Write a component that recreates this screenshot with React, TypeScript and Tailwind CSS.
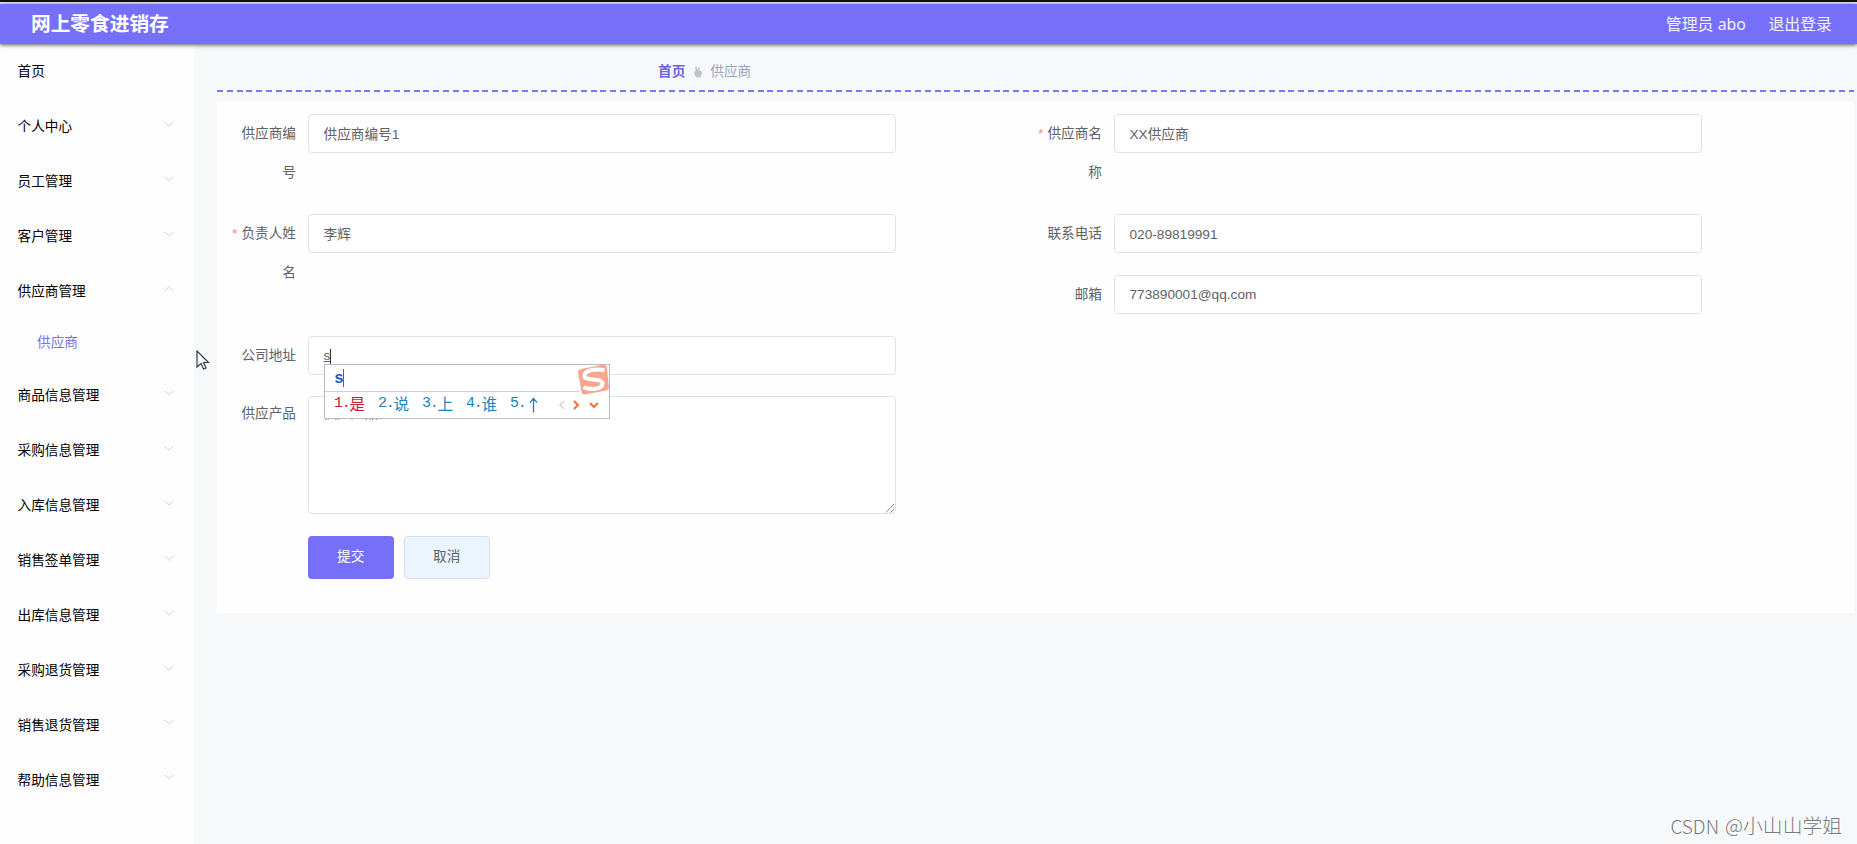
import React from "react";

type Entry = { name: string; children?: string[]; leaf?: boolean };

const entries: Entry[] = [
  { name: "首页", leaf: true },
  { name: "个人中心" },
  { name: "员工管理" },
  { name: "客户管理" },
  { name: "供应商管理", children: ["供应商"] },
  { name: "商品信息管理" },
  { name: "采购信息管理" },
  { name: "入库信息管理" },
  { name: "销售签单管理" },
  { name: "出库信息管理" },
  { name: "采购退货管理" },
  { name: "销售退货管理" },
  { name: "帮助信息管理" },
];

function Chevron({ up }: { up?: boolean }) {
  return (
    <svg width="10" height="6" viewBox="0 0 10 6" fill="none" stroke="#e2e2e6" strokeWidth="1.1" className="-mt-[7px]">
      <path d={up ? "M0.5 5 5 0.8 9.5 5" : "M0.5 0.8 5 5 9.5 0.8"} />
    </svg>
  );
}

function Sidebar() {
  return (
    <nav className="w-[194px] shrink-0 bg-[#fdfdfe] pt-[1.5px] text-black">
      {entries.map((e) => (
        <div key={e.name}>
          <div className="flex h-[54.95px] items-center justify-between pl-[17.5px] pr-[20.5px]">
            <span>{e.name}</span>
            {!e.leaf && <Chevron up={!!e.children} />}
          </div>
          {e.children?.map((c) => (
            <div key={c} className="flex h-[49.2px] items-center pb-[2px] pl-[37px] text-[#7874ea]">
              {c}
            </div>
          ))}
        </div>
      ))}
    </nav>
  );
}

function Field({ label, required, children, className = "" }: { label: string[]; required?: boolean; children: React.ReactNode; className?: string }) {
  return (
    <div className={"flex items-start " + className}>
      <div className="w-[79px] shrink-0 text-right leading-[39px] text-[#606266]">
        {label.map((l, i) => (
          <div key={l} className="whitespace-nowrap">
            {i === 0 && required && <span className="mr-1 text-[#f08a8a]">*</span>}
            {l}
          </div>
        ))}
      </div>
      <div className="ml-[11.5px] flex">{children}</div>
    </div>
  );
}

function Box({ children }: { children: React.ReactNode }) {
  return (
    <div className="flex h-[39px] w-[588px] items-center rounded-[4px] border border-[#dfe2e8] bg-white px-[15px] pt-[3px] text-[#606266]">
      {children}
    </div>
  );
}

function Candidate({ n, word, active }: { n: number; word: string; active?: boolean }) {
  return (
    <span className={"flex w-[44px] items-center " + (active ? "text-[#c8202c]" : "text-[#1a82bd]")}>
      <span className="w-[15.6px] font-['Liberation_Mono'] text-[15px] tracking-[-1.2px]">{n}.</span>
      <span className="text-[15.6px]">{word}</span>
    </span>
  );
}

function ImePopup() {
  return (
    <div className="absolute left-[16px] top-[28px] z-10 h-[55px] w-[286px] border border-[#b9bcc4] bg-white">
      <div className="flex h-[26px] items-center pl-[10px] pt-px">
        <b className="font-['Liberation_Sans'] text-[16px] leading-none text-[#155fbd]">s</b>
        <i className="h-[18px] w-px bg-[#d0303a]" />
      </div>
      <div className="h-px w-[254px] bg-[#cccfd6]" />
      <div className="flex h-[26px] items-center pl-[9.5px]">
        <Candidate n={1} word="是" active />
        <Candidate n={2} word="说" />
        <Candidate n={3} word="上" />
        <Candidate n={4} word="谁" />
        <span className="flex w-[44px] items-center text-[#1a82bd]">
          <span className="w-[18.5px] font-['Liberation_Mono'] text-[15px] tracking-[-1.2px]">5.</span>
          <svg width="9" height="16" viewBox="0 0 9 16" fill="none" stroke="currentColor" strokeWidth="1.3">
            <path d="M4.5 15.500V1.500M1 5.500 4.500 1.500 8 5.500" />
          </svg>
        </span>
        <svg width="42" height="12" viewBox="0 0 42 12" fill="none" strokeWidth="2" className="ml-[4px]">
          <path d="M6 2 2 6 6 10" stroke="#d3d3d6" strokeWidth="1.6" />
          <path d="M16 2 20 6 16 10" stroke="#f0703c" />
          <path d="M32 4 36 8 40 4" stroke="#f0703c" />
        </svg>
      </div>
      <svg width="32" height="32" viewBox="0 0 32 32" className="absolute right-0 top-[-1px]">
        <path d="M4 5Q15 3 26 0.5Q29 0 29.8 3L32 23Q32 26 29 26.5L8 30.5Q5 31 4.500 28L1 8Q1 5.500 4 5Z" fill="#f7a78d" />
        <path d="M27.500 6.500C18 4 7 6.500 7.500 12C8 17.500 25.500 13.500 25.500 19.500C25.500 25.500 13 26.500 6.500 23" fill="none" stroke="#fff" strokeWidth="4" />
      </svg>
    </div>
  );
}

export default function App() {
  return (
    <div className="flex h-[844px] w-[1857px] flex-col overflow-hidden bg-[#f6f8fa] font-['Liberation_Sans','Noto_Sans_CJK_SC',sans-serif] text-[13.65px] leading-normal">
      <div className="h-[2px] shrink-0 bg-[#111]" />
      <div className="h-[2px] shrink-0 bg-[#e6e6f2]" />
      <header className="relative z-10 flex h-[39.5px] shrink-0 items-center justify-between bg-[#766ffa] pl-[31px] pr-[25px] pt-[2px] text-[#f4f2ff] shadow-[0_1px_4px_rgba(0,0,0,0.65)]">
        <h1 className="text-[19.7px] font-bold leading-none text-white">网上零食进销存</h1>
        <div className="flex gap-[22.500px] font-['Noto_Sans','Noto_Sans_CJK_SC',sans-serif] text-[15.9px] leading-none">
          <span>管理员 abo</span>
          <span>退出登录</span>
        </div>
      </header>
      <div className="flex min-h-0 flex-1">
        <Sidebar />
        <main className="relative flex flex-1 flex-col pl-[23px] pr-[3px]">
          <div className="flex h-[46.500px] items-center gap-[7.500px] pl-[441px] pt-[11px]">
            <b className="font-semibold text-[#6c64e4]">首页</b>
            <svg width="10" height="12" viewBox="0 0 10 12" fill="#bfc5cc">
              <path d="M2.200 0.800 3.700 0.500 4.500 4 5.300 1.300 6.600 1.500 6.500 4.500 8.800 5.200Q9.500 8.500 7.500 11.300L3.500 11.500Q0.800 9.500 1 6L2.600 5Z" />
            </svg>
            <span className="text-[#97a8be]">供应商</span>
          </div>
          <div className="h-[2px] shrink-0 bg-[repeating-linear-gradient(90deg,#7d77ea_0_6px,transparent_6px_9.83px)]" />
          <section className="mt-[10px] flex h-[510.500px] shrink-0 bg-[#fefefe] pt-[12px]">
            <div className="w-[806px] shrink-0">
              <Field label={["供应商编", "号"]} className="h-[100px]">
                <Box>供应商编号1</Box>
              </Field>
              <Field label={["负责人姓", "名"]} required className="h-[121.500px]">
                <Box>李辉</Box>
              </Field>
              <Field label={["公司地址"]} className="h-[60.500px]">
                <div className="relative">
                  <Box>
                    <span className="underline">s</span>
                    <i className="h-[15px] w-px bg-[#333]" />
                  </Box>
                  <ImePopup />
                </div>
              </Field>
              <div className="flex h-[139.500px] items-start">
                <div className="w-[79px] shrink-0 text-right leading-[36px] text-[#606266]">供应产品</div>
                <div className="relative ml-[11.500px] h-[117.500px] w-[588px] rounded-[4px] border border-[#dfe2e8] bg-white px-[15px] pt-[7px] text-[#606266]">
                  供应产品
                  <svg width="10" height="10" viewBox="0 0 10 10" stroke="#888" className="absolute bottom-0 right-0">
                    <path d="M1 9.500 9 1M5.500 9.500 9 6" />
                  </svg>
                </div>
              </div>
              <div className="flex gap-[9.500px] pl-[90.500px]">
                <button className="h-[43px] w-[86.500px] rounded-[4px] bg-[#766ffa] pt-px text-white">提交</button>
                <button className="h-[43px] w-[86.500px] rounded-[4px] border border-[#d8dfe9] bg-[#ebf5ff] pt-px text-[#606266]">取消</button>
              </div>
            </div>
            <div>
              <Field label={["供应商名", "称"]} required className="h-[100px]">
                <Box>XX供应商</Box>
              </Field>
              <Field label={["联系电话"]} className="h-[60.500px]">
                <Box>020-89819991</Box>
              </Field>
              <Field label={["邮箱"]}>
                <Box>773890001@qq.com</Box>
              </Field>
            </div>
          </section>
          <svg width="14" height="21" viewBox="0 0 14 21" className="absolute left-[2px] top-[306px]">
            <path d="M1 1V17L5 13.500 7.500 19 10 18 7.500 12.500H12.500Z" fill="#fff" stroke="#333a48" strokeWidth="1.200" />
          </svg>
          <div className="absolute bottom-[9px] right-[15px] flex items-center gap-[6px] font-['Noto_Sans_CJK_SC',sans-serif] font-light leading-none text-[#77797d] [text-shadow:1px_1px_0_#fff]">
            <span className="text-[19px]">CSDN</span>
            <span className="text-[19.800px]">@小山山学姐</span>
          </div>
        </main>
      </div>
    </div>
  );
}
